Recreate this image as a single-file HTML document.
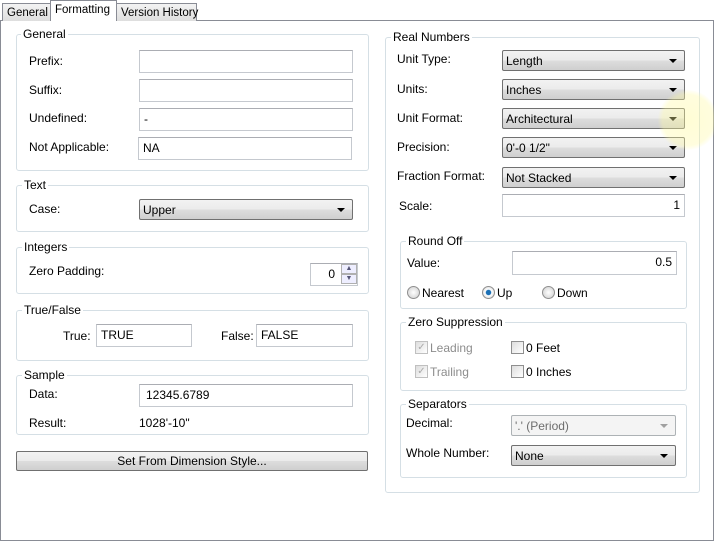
<!DOCTYPE html>
<html><head><meta charset="utf-8"><style>
*{box-sizing:border-box}
body{margin:0;width:714px;height:541px;overflow:hidden;background:#fff;font:12px "Liberation Sans",sans-serif;color:#000;position:relative}
.a{position:absolute}
.frame{left:0;top:20px;width:714px;height:521px;border:1px solid #898c95;background:#fff}
.tab{top:3px;height:18px;border:1px solid #898c95;border-bottom:none;background:linear-gradient(#f3f3f3,#dedede);padding:3px 4px 0;white-space:nowrap;font-size:11.5px}
.tab.sel{top:0;height:21px;background:#fff;padding-top:3px;z-index:2}
.g{border:1px solid #d5dfe5;border-radius:3px}
.lg{background:#fff;padding:0 2px;line-height:13px}
.in{border:1px solid #c5c9cf;border-top-color:#abadb3;background:#fff;padding:3px 4px 2px;line-height:15px}
.cb{border:1px solid #707070;border-radius:2px;background:linear-gradient(#f2f2f2 0%,#ebebeb 50%,#dddddd 51%,#cfcfcf 100%);padding:4px 3px 2px;line-height:13px}
.cb:after{content:"";position:absolute;right:7px;top:8px;border:4px solid transparent;border-top:4px solid #000;border-bottom:0}
.dis{border-color:#adb2b5;background:#f4f4f4;color:#6d6d6d}
.dis:after{border-top-color:#a0a0a0}
.chk{width:13px;height:13px;border:1px solid #8f8f8f;background:linear-gradient(135deg,#ddd,#fff)}
.rad{width:13px;height:13px;border:1px solid #8f8f8f;border-radius:50%;background:radial-gradient(#fff,#ccc)}
.gray{color:#8d8d8d}
</style></head><body>
<div class="a frame"></div>
<div class="a tab" style="left:2px;width:49px">General</div>
<div class="a tab sel" style="left:50px;width:67px">Formatting</div>
<div class="a tab" style="left:116px;width:81px">Version History</div>

<div class="a g" style="left:16px;top:34px;width:353px;height:137px"></div>
<div class="a lg" style="left:21px;top:28px">General</div>
<div class="a" style="left:29px;top:54px">Prefix:</div>
<div class="a in" style="left:139px;top:50px;width:214px;height:23px"></div>
<div class="a" style="left:29px;top:83px">Suffix:</div>
<div class="a in" style="left:139px;top:79px;width:214px;height:23px"></div>
<div class="a" style="left:29px;top:111px">Undefined:</div>
<div class="a in" style="left:139px;top:108px;width:214px;height:23px">-</div>
<div class="a" style="left:29px;top:140px">Not Applicable:</div>
<div class="a in" style="left:138px;top:137px;width:214px;height:23px">NA</div>

<div class="a g" style="left:16px;top:185px;width:353px;height:47px"></div>
<div class="a lg" style="left:22px;top:179px">Text</div>
<div class="a" style="left:29px;top:202px">Case:</div>
<div class="a cb" style="left:139px;top:199px;width:214px;height:21px">Upper</div>

<div class="a g" style="left:16px;top:247px;width:353px;height:47px"></div>
<div class="a lg" style="left:22px;top:241px">Integers</div>
<div class="a" style="left:29px;top:264px">Zero Padding:</div>
<div class="a in" style="left:310px;top:263px;width:48px;height:23px;text-align:right;padding-right:22px">0</div>
<div class="a" style="left:341px;top:264px;width:16px;height:10px;border:1px solid #b0b0b0;background:#eef;font-size:7px;text-align:center;line-height:8px;color:#557">▲</div>
<div class="a" style="left:341px;top:274px;width:16px;height:10px;border:1px solid #b0b0b0;background:#eef;font-size:7px;text-align:center;line-height:8px;color:#557">▼</div>

<div class="a g" style="left:16px;top:310px;width:353px;height:51px"></div>
<div class="a lg" style="left:22px;top:304px">True/False</div>
<div class="a" style="left:63px;top:329px">True:</div>
<div class="a in" style="left:96px;top:324px;width:96px;height:23px">TRUE</div>
<div class="a" style="left:221px;top:329px">False:</div>
<div class="a in" style="left:256px;top:324px;width:97px;height:23px">FALSE</div>

<div class="a g" style="left:16px;top:375px;width:353px;height:60px"></div>
<div class="a lg" style="left:22px;top:369px">Sample</div>
<div class="a" style="left:29px;top:387px">Data:</div>
<div class="a in" style="left:139px;top:384px;width:214px;height:23px;padding-left:6px">12345.6789</div>
<div class="a" style="left:29px;top:416px">Result:</div>
<div class="a" style="left:139px;top:416px">1028'-10"</div>

<div class="a" style="left:16px;top:451px;width:352px;height:20px;border:1px solid #707070;border-radius:2px;background:linear-gradient(#f2f2f2 0%,#ebebeb 50%,#dddddd 51%,#cfcfcf 100%);text-align:center;line-height:18px">Set From Dimension Style...</div>

<div class="a g" style="left:385px;top:37px;width:315px;height:456px"></div>
<div class="a lg" style="left:391px;top:31px">Real Numbers</div>
<div class="a" style="left:397px;top:52px">Unit Type:</div>
<div class="a cb" style="left:502px;top:50px;width:183px;height:21px">Length</div>
<div class="a" style="left:397px;top:82px">Units:</div>
<div class="a cb" style="left:502px;top:79px;width:183px;height:21px">Inches</div>
<div class="a" style="left:397px;top:111px">Unit Format:</div>
<div class="a cb" style="left:502px;top:108px;width:183px;height:21px">Architectural</div>
<div class="a" style="left:397px;top:140px">Precision:</div>
<div class="a cb" style="left:502px;top:137px;width:183px;height:21px">0'-0 1/2"</div>
<div class="a" style="left:397px;top:169px">Fraction Format:</div>
<div class="a cb" style="left:502px;top:167px;width:183px;height:21px">Not Stacked</div>
<div class="a" style="left:399px;top:199px">Scale:</div>
<div class="a in" style="left:502px;top:194px;width:183px;height:23px;text-align:right">1</div>

<div class="a g" style="left:400px;top:241px;width:287px;height:68px"></div>
<div class="a lg" style="left:406px;top:235px">Round Off</div>
<div class="a" style="left:407px;top:256px">Value:</div>
<div class="a in" style="left:512px;top:251px;width:165px;height:24px;text-align:right">0.5</div>
<div class="a rad" style="left:407px;top:286px"></div><div class="a" style="left:422px;top:286px">Nearest</div>
<div class="a rad" style="left:482px;top:286px;background:radial-gradient(#1a6fb5 30%,#fff 40%,#ccc)"></div><div class="a" style="left:497px;top:286px">Up</div>
<div class="a rad" style="left:542px;top:286px"></div><div class="a" style="left:557px;top:286px">Down</div>

<div class="a g" style="left:400px;top:322px;width:287px;height:69px"></div>
<div class="a lg" style="left:406px;top:316px">Zero Suppression</div>
<div class="a chk" style="left:415px;top:341px;border-color:#c0c0c0;color:#aaa;font-size:10px;line-height:11px;text-align:center">✓</div><div class="a gray" style="left:430px;top:341px">Leading</div>
<div class="a chk" style="left:511px;top:341px"></div><div class="a" style="left:526px;top:341px">0 Feet</div>
<div class="a chk" style="left:415px;top:365px;border-color:#c0c0c0;color:#aaa;font-size:10px;line-height:11px;text-align:center">✓</div><div class="a gray" style="left:430px;top:365px">Trailing</div>
<div class="a chk" style="left:511px;top:365px"></div><div class="a" style="left:526px;top:365px">0 Inches</div>

<div class="a g" style="left:400px;top:404px;width:287px;height:74px"></div>
<div class="a lg" style="left:406px;top:398px">Separators</div>
<div class="a" style="left:406px;top:416px">Decimal:</div>
<div class="a cb dis" style="left:511px;top:415px;width:165px;height:21px">'.' (Period)</div>
<div class="a" style="left:406px;top:446px">Whole Number:</div>
<div class="a cb" style="left:511px;top:445px;width:165px;height:21px">None</div>

<div class="a" style="left:658px;top:90px;width:60px;height:60px;border-radius:50%;background:radial-gradient(rgba(255,250,150,.4) 0%,rgba(255,250,160,.35) 60%,rgba(255,255,200,0) 72%)"></div>
</body></html>
